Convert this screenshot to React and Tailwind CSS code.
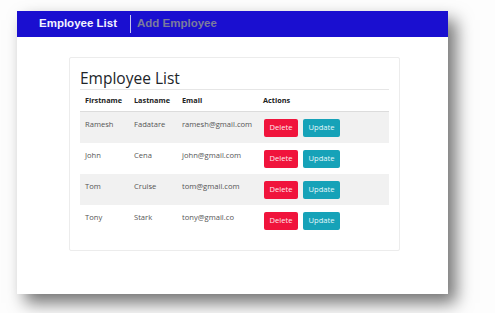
export default function App() {
  const rows = [
    ["Ramesh", "Fadatare", "ramesh@gmail.com"],
    ["John", "Cena", "john@gmail.com"],
    ["Tom", "Cruise", "tom@gmail.com"],
    ["Tony", "Stark", "tony@gmail.co"],
  ];
  return (
    <div className="w-[495px] h-[313px] bg-[#fdfdfd] pt-[11px] pl-[17px] overflow-hidden">
      <div className="w-[431px] h-[283px] bg-white shadow-[8px_9px_16px_rgba(0,0,0,0.55)] flex flex-col">
        <div className="h-[26px] bg-[#1a0fd0] flex items-center pl-[22px] font-['Liberation_Sans',Arial,sans-serif] font-bold text-[11.5px]">
          <span className="text-[#f2f2ff]">Employee List</span>
          <span className="w-px h-[18px] bg-[#c8c8f0] ml-[13px] mr-[6px]"></span>
          <span className="text-[#7b7b9c]">Add Employee</span>
        </div>
        <div className="mt-[20px] ml-[52px] w-[331px] h-[194px] border border-[#ececec] rounded-[2px] px-[10px] font-['Open_Sans','Noto_Sans',sans-serif]">
          <div className="h-[32px] flex items-end pb-[3px] text-[15.5px] font-medium text-[#212529] leading-none border-b border-[#e6e6e6]">
            Employee List
          </div>
          <div className="flex h-[22px] items-center text-[7.3px] font-bold text-[#222] border-b border-[#dcdcdc]">
            <div className="w-[49px] pl-[5px]">Firstname</div>
            <div className="w-[48px] pl-[5px]">Lastname</div>
            <div className="w-[81px] pl-[5px]">Email</div>
            <div className="pl-[5px]">Actions</div>
          </div>
          {rows.map((r, i) => (
            <div
              key={i}
              className={`flex h-[31px] items-center text-[7.6px] text-[#555] ${i % 2 === 0 ? "bg-[#f1f1f1]" : "bg-white"}`}
            >
              <div className="w-[49px] pl-[5px] -mt-[6px]">{r[0]}</div>
              <div className="w-[48px] pl-[5px] -mt-[6px]">{r[1]}</div>
              <div className="w-[81px] pl-[5px] -mt-[6px]">{r[2]}</div>
              <div className="pl-[6px] flex gap-[5px]">
                <button className="w-[34px] h-[18px] bg-[#f0143c] text-[#ffe8ec] text-[7.6px] rounded-[2px]">Delete</button>
                <button className="w-[37px] h-[18px] bg-[#16a2b8] text-[#e6f8fb] text-[7.6px] rounded-[2px]">Update</button>
              </div>
            </div>
          ))}
        </div>
      </div>
    </div>
  );
}
